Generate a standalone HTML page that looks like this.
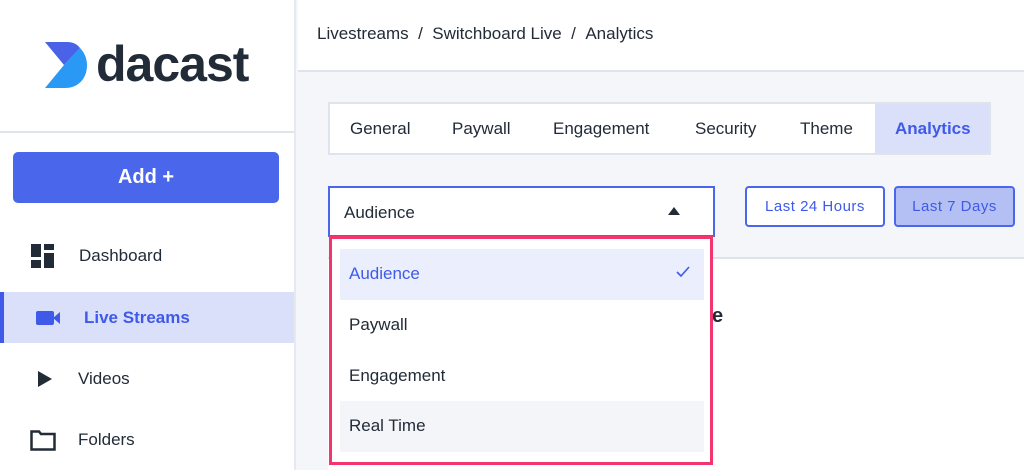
<!DOCTYPE html>
<html><head><meta charset="utf-8"><style>
*{margin:0;padding:0;box-sizing:border-box}
body{width:1024px;height:470px;overflow:hidden;font-family:"Liberation Sans",sans-serif;background:#f5f6fa;position:relative;color:#222b38}
.abs{position:absolute}
.side{left:0;top:0;width:296px;height:470px;background:#fff;border-right:2px solid #e6e9f0}
.nav{left:0;width:294px;height:51px;font-size:17px;display:flex;align-items:center}
</style></head><body>
<div class="abs side">
  <svg class="abs" style="left:45px;top:42px" width="44" height="47" viewBox="0 0 44 47">
    <path d="M0 0L19 23 0 46H20C33 46 42 37 42 23 42 16 39 10 35 6L19 23Z" fill="#2a98f5"/>
    <path d="M0 0H22C28 0 32 2 35 6L19 23Z" fill="#4a62e8"/>
  </svg>
  <div class="abs" style="left:96px;top:35px;font-size:50px;font-weight:bold;color:#222b38;letter-spacing:-1px">dacast</div>
  <div class="abs" style="left:0;top:131px;width:294px;height:2px;background:#dfe3ec"></div>
  <div class="abs" style="left:13px;top:152px;width:266px;height:51px;background:#4a67eb;border-radius:5px;color:#fff;font-size:20px;font-weight:bold;display:flex;align-items:center;justify-content:center">Add +</div>
  <div class="abs nav" style="top:230px"><svg style="margin-left:31px" width="23" height="24"><rect x="0" y="0" width="10" height="13" fill="#222b38"/><rect x="13" y="0" width="10" height="6" fill="#222b38"/><rect x="13" y="9" width="10" height="15" fill="#222b38"/><rect x="0" y="16" width="10" height="8" fill="#222b38"/></svg><span style="margin-left:25px">Dashboard</span></div>
  <div class="abs nav" style="top:292px;background:#dbe0fa;border-left:4px solid #3f5ae8;color:#3f5ae8;font-weight:bold"><svg style="margin-left:32px" width="24" height="16"><rect x="0" y="1" width="18" height="14" rx="2" fill="#3f5ae8"/><path d="M17 8L24 2V14Z" fill="#3f5ae8"/></svg><span style="margin-left:24px">Live Streams</span></div>
  <div class="abs nav" style="top:353px"><svg style="margin-left:38px" width="14" height="16"><path d="M0 0L14 8 0 16Z" fill="#222b38"/></svg><span style="margin-left:26px">Videos</span></div>
  <div class="abs nav" style="top:414px"><svg style="margin-left:30px" width="26" height="22"><path d="M1.5 2.5H9L11 5H24.5V20.5H1.5Z" fill="none" stroke="#222b38" stroke-width="2.5"/></svg><span style="margin-left:22px">Folders</span></div>
</div>
<div class="abs" style="left:298px;top:0;width:726px;height:72px;background:#fff;border-bottom:2px solid #dfe3ec"></div>
<div class="abs" style="left:317px;top:24px;font-size:17px;color:#222b38">Livestreams &nbsp;/ &nbsp;Switchboard Live &nbsp;/ &nbsp;Analytics</div>
<div class="abs" style="left:328px;top:102px;width:663px;height:53px;background:#fff;border:2px solid #dfe3ec;font-size:17px">
  <span class="abs" style="left:20px;top:15px">General</span>
  <span class="abs" style="left:122px;top:15px">Paywall</span>
  <span class="abs" style="left:223px;top:15px">Engagement</span>
  <span class="abs" style="left:365px;top:15px">Security</span>
  <span class="abs" style="left:470px;top:15px">Theme</span>
  <div class="abs" style="left:545px;top:0;width:114px;height:49px;background:#dbe0fa;color:#3f5ae8;font-weight:bold;padding:15px 0 0 20px">Analytics</div>
</div>
<div class="abs" style="left:745px;top:186px;width:140px;height:41px;background:#fff;border:2px solid #4a67eb;border-radius:4px;color:#3f5ae8;font-size:15px;letter-spacing:0.5px;display:flex;align-items:center;justify-content:center">Last 24 Hours</div>
<div class="abs" style="left:894px;top:186px;width:121px;height:41px;background:#b4c0f4;border:2px solid #4a67eb;border-radius:4px;color:#3f5ae8;font-size:15px;letter-spacing:0.5px;display:flex;align-items:center;justify-content:center">Last 7 Days</div>
<div class="abs" style="left:328px;top:257px;width:696px;height:213px;background:#fff;border-top:2px solid #dfe3ec"></div>
<div class="abs" style="left:712px;top:305px;font-size:20px;font-weight:bold">e</div>
<div class="abs" style="left:328px;top:186px;width:387px;height:51px;background:#fff;border:2px solid #4a67eb;font-size:17px"><span class="abs" style="left:14px;top:15px">Audience</span><svg class="abs" style="left:338px;top:19px" width="12" height="8"><path d="M0 8L6 0 12 8Z" fill="#222b38"/></svg></div>
<div class="abs" style="left:329px;top:236px;width:384px;height:229px;background:#fff;border:3px solid #f2356d;font-size:17px">
  <div class="abs" style="left:8px;top:10px;width:364px;height:51px;background:#ebeefd;color:#3f5ae8"><span class="abs" style="left:9px;top:15px">Audience</span><svg class="abs" style="left:336px;top:17px" width="14" height="11"><path d="M1 6L5 10 13 1" fill="none" stroke="#3f5ae8" stroke-width="1.6"/></svg></div>
  <span class="abs" style="left:17px;top:76px">Paywall</span>
  <span class="abs" style="left:17px;top:127px">Engagement</span>
  <div class="abs" style="left:8px;top:162px;width:364px;height:51px;background:#f4f5f9"><span class="abs" style="left:9px;top:15px">Real Time</span></div>
</div>
</body></html>
